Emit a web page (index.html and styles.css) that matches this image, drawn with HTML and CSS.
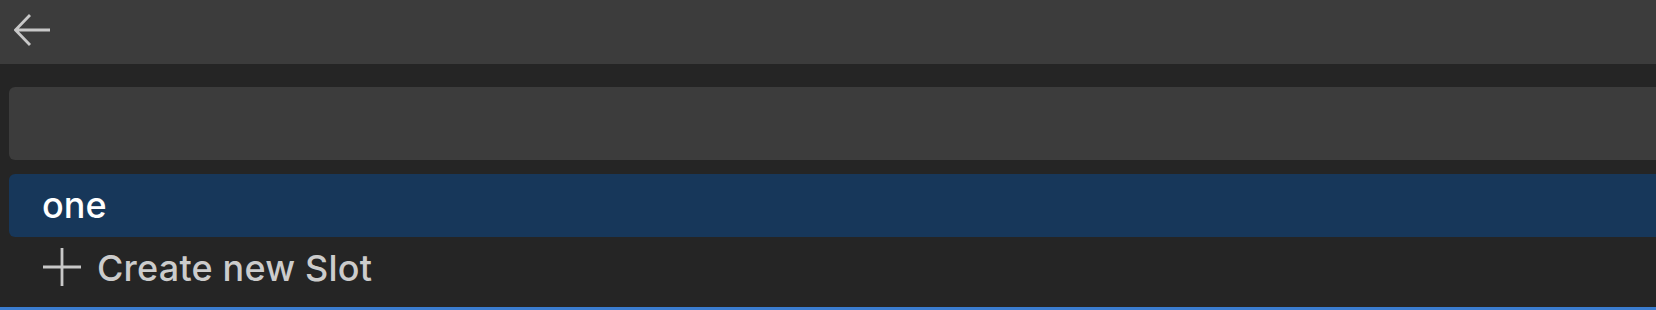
FILE: index.html
```html
<!DOCTYPE html>
<html>
<head>
<meta charset="utf-8">
<link rel="stylesheet" href="styles.css">
</head>
<body>
<div class="panel">
  <div class="header">
    <svg class="back" width="40" height="36" viewBox="0 0 40 36">
      <path d="M16 3 L1.5 18 L16 33 M1.5 18 L36 18" fill="none" stroke="#c8c8c8" stroke-width="2.8"/>
    </svg>
  </div>
  <div class="body">
    <div class="input"></div>
    <div class="list">
      <div class="item selected"><span class="label">one</span></div>
      <div class="item create">
        <svg class="plus" width="38" height="38" viewBox="0 0 38 38">
          <path d="M19 0 V38 M0 19 H38" fill="none" stroke="#c8c8c8" stroke-width="2.8"/>
        </svg>
        <span class="label">Create new Slot</span>
      </div>
    </div>
  </div>
  <div class="footer"></div>
</div>
</body>
</html>
```
FILE: styles.css
```css
html, body {
  margin: 0;
  padding: 0;
  background: #252525;
  overflow: hidden;
}
.panel {
  width: 1656px;
  height: 310px;
  display: flex;
  flex-direction: column;
  font-family: Inter, "Noto Sans", sans-serif;
}
.header {
  height: 64px;
  background: #3c3c3c;
  display: flex;
  align-items: center;
  padding-left: 14px;
  box-sizing: border-box;
}
.back {
  display: block;
  margin-top: -4px;
}
.body {
  flex: 1;
  padding: 23px 0 0 9px;
  display: flex;
  flex-direction: column;
}
.input {
  height: 73px;
  background: #3c3c3c;
  border-radius: 6px 0 0 6px;
}
.list {
  margin-top: 14px;
  display: flex;
  flex-direction: column;
}
.item {
  display: flex;
  align-items: center;
  font-size: 36px;
  font-weight: 500;
}
.selected {
  height: 63px;
  background: #17375a;
  border-radius: 6px 0 0 6px;
  color: #ffffff;
  padding-left: 33px;
  padding-bottom: 2px;
  box-sizing: border-box;
}
.create {
  height: 58px;
  color: #cccccc;
  padding-left: 34px;
  padding-top: 4px;
  box-sizing: border-box;
  letter-spacing: 0.2px;
}
.plus {
  display: block;
  margin-right: 16px;
  margin-top: -3px;
}
.footer {
  height: 3px;
  background: #3b7dd0;
}
```
